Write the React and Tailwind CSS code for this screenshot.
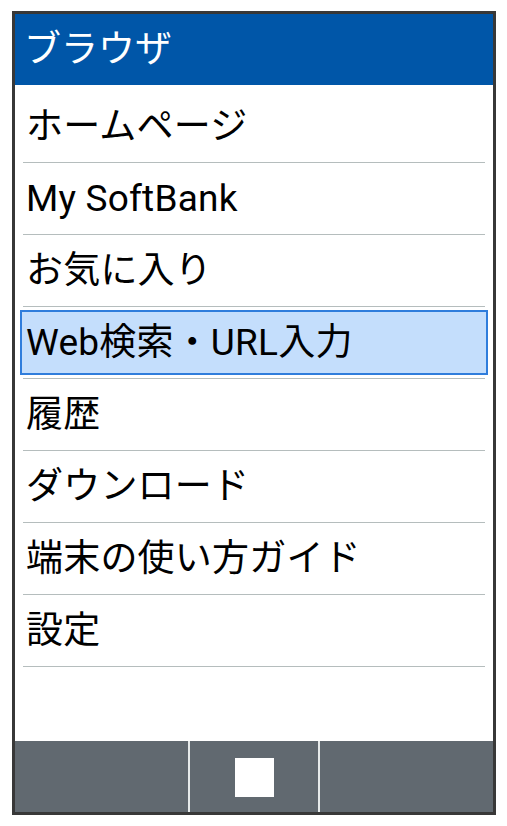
const items = [
  "ホームページ",
  "My SoftBank",
  "お気に入り",
  "Web検索・URL入力",
  "履歴",
  "ダウンロード",
  "端末の使い方ガイド",
  "設定",
];

export default function App() {
  return (
    <div
      className="min-h-screen bg-white pt-[11px] pl-[12px]"
      style={{ fontFamily: 'Roboto, "Noto Sans CJK JP", sans-serif' }}
    >
      <div className="w-[484px] h-[804px] border-[3px] border-[#383838] flex flex-col bg-white">
        {/* Title bar */}
        <header className="h-[71px] bg-[#0056a8] text-white text-[37px] flex items-center pl-[9px] leading-none">
          ブラウザ
        </header>

        {/* Menu list */}
        <ul className="flex-1 px-[8px] pt-[6px]">
          {items.map((label, i) => (
            <li
              key={label}
              className="h-[72px] border-b border-[#b5bdbd] py-[3px] text-[37px] text-black leading-none tracking-[0.2px]"
            >
              {i === 3 ? (
                <div className="-mx-[3px] h-full border-2 border-[#2f7ddc] bg-[#c4defc] flex items-center pl-[4px]">
                  {label}
                </div>
              ) : (
                <div className="h-full flex items-center pl-[3px]">{label}</div>
              )}
            </li>
          ))}
        </ul>

        {/* Soft key bar */}
        <footer className="h-[71px] bg-[#616970] flex">
          <div className="w-[173px]" />
          <div className="w-[2px] bg-[#e6eaea]" />
          <div className="w-[128px] flex items-center justify-center">
            <div className="w-[39px] h-[39px] bg-white mt-[2px]" />
          </div>
          <div className="w-[2px] bg-[#e6eaea]" />
          <div className="flex-1" />
        </footer>
      </div>
    </div>
  );
}
